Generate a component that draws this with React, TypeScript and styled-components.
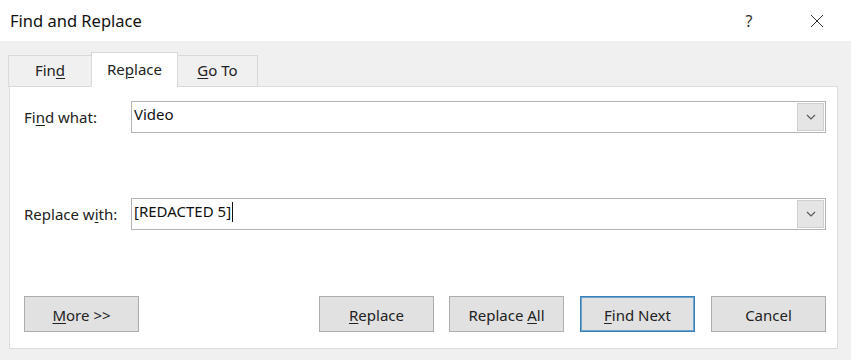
import React from "react";
import styled, { createGlobalStyle } from "styled-components";

const GlobalStyle = createGlobalStyle`
  html, body {
    margin: 0;
    padding: 0;
    background: #f0f0f0;
  }
  body {
    font-family: "Noto Sans", "Open Sans", "Liberation Sans", sans-serif;
    color: #1a1a1a;
  }
`;

const Window = styled.div`
  width: 851px;
  height: 360px;
  display: flex;
  flex-direction: column;
  background: #f0f0f0;
  overflow: hidden;
`;

const TitleBar = styled.div`
  height: 41px;
  flex: none;
  display: flex;
  align-items: center;
  background: #ffffff;
  padding-left: 10px;
`;

const Title = styled.div`
  flex: 1;
  font-size: 16.5px;
  color: #111;
  padding-bottom: 1px;
`;

const TitleButton = styled.div`
  width: 68px;
  height: 41px;
  display: flex;
  align-items: center;
  justify-content: center;
  font-size: 16px;
  color: #333;
`;

const Body = styled.div`
  flex: 1;
  display: flex;
  flex-direction: column;
  padding: 11px 13px 11px 8px;
`;

const TabRow = styled.div`
  display: flex;
  align-items: flex-end;
  height: 35px;
  position: relative;
  z-index: 1;
`;

const Tab = styled.div<{ $active?: boolean; $width: number }>`
  width: ${(p) => p.$width}px;
  height: ${(p) => (p.$active ? 35 : 32)}px;
  line-height: ${(p) => (p.$active ? 33 : 29)}px;
  box-sizing: border-box;
  text-align: center;
  font-size: 15px;
  background: ${(p) => (p.$active ? "#ffffff" : "#f0f0f0")};
  border: 1px solid #d9d9d9;
  border-bottom: ${(p) => (p.$active ? "1px solid #ffffff" : "1px solid #d9d9d9")};
  margin-left: -1px;
  color: #222;
  &:first-child {
    margin-left: 0;
  }
`;

const Panel = styled.div`
  flex: 1;
  margin-top: -1px;
  margin-left: 1px;
  background: #ffffff;
  border: 1px solid #dcdcdc;
  display: flex;
  flex-direction: column;
  padding: 14px 11px 16px 14px;
`;

const FieldRow = styled.div<{ $gap?: number }>`
  display: flex;
  align-items: center;
  margin-top: ${(p) => p.$gap ?? 0}px;
`;

const Label = styled.div`
  width: 107px;
  flex: none;
  font-size: 15px;
  color: #222;
`;

const Combo = styled.div`
  flex: 1;
  height: 32px;
  box-sizing: border-box;
  border: 1px solid #b4b4b4;
  display: flex;
  align-items: stretch;
  background: #fff;
`;

const ComboText = styled.div`
  flex: 1;
  font-size: 15px;
  padding: 2px 0 0 2px;
  color: #111;
  white-space: pre;
`;

const Caret = styled.span`
  display: inline-block;
  width: 1px;
  height: 20px;
  background: #111;
  margin-left: 1px;
  vertical-align: -5px;
`;

const ComboButton = styled.div`
  width: 25px;
  margin: 1px;
  background: #e5e5e5;
  border: 1px solid #cfcfcf;
  display: flex;
  align-items: center;
  justify-content: center;
`;

const Spacer = styled.div`
  flex: 1;
`;

const ButtonRow = styled.div`
  display: flex;
  align-items: center;
`;

const Button = styled.div<{ $primary?: boolean; $gap?: number }>`
  width: 115px;
  height: 36px;
  box-sizing: border-box;
  margin-left: ${(p) => p.$gap ?? 0}px;
  background: #e1e1e1;
  border: 1px solid ${(p) => (p.$primary ? "#3a80b8" : "#adadad")};
  box-shadow: ${(p) => (p.$primary ? "inset 0 0 0 1px #6ea3cc" : "none")};
  text-align: center;
  line-height: 36px;
  font-size: 15px;
  color: #222;
`;

const U = styled.span`
  text-decoration: underline;
  text-underline-offset: 2px;
  text-decoration-thickness: 1px;
`;

const Chevron = () => (
  <svg width="10" height="6" viewBox="0 0 10 6">
    <path d="M1 1 L5 5 L9 1" fill="none" stroke="#555" strokeWidth="1.1" />
  </svg>
);

const CloseIcon = () => (
  <svg width="14" height="14" viewBox="0 0 14 14">
    <path d="M1 1 L13 13 M13 1 L1 13" stroke="#333" strokeWidth="1" fill="none" />
  </svg>
);

const App = () => {
  return (
    <>
      <GlobalStyle />
      <Window>
        <TitleBar>
          <Title>Find and Replace</Title>
          <TitleButton>?</TitleButton>
          <TitleButton>
            <CloseIcon />
          </TitleButton>
        </TitleBar>
        <Body>
          <TabRow>
            <Tab $width={84}>
              Fin<U>d</U>
            </Tab>
            <Tab $active $width={87}>
              Re<U>p</U>lace
            </Tab>
            <Tab $width={81}>
              <U>G</U>o To
            </Tab>
          </TabRow>
          <Panel>
            <FieldRow>
              <Label>
                Fi<U>n</U>d what:
              </Label>
              <Combo>
                <ComboText>Video</ComboText>
                <ComboButton>
                  <Chevron />
                </ComboButton>
              </Combo>
            </FieldRow>
            <FieldRow $gap={65}>
              <Label>
                Replace w<U>i</U>th:
              </Label>
              <Combo>
                <ComboText>
                  [REDACTED 5]
                  <Caret />
                </ComboText>
                <ComboButton>
                  <Chevron />
                </ComboButton>
              </Combo>
            </FieldRow>
            <Spacer />
            <ButtonRow>
              <Button>
                <U>M</U>ore &gt;&gt;
              </Button>
              <Spacer />
              <Button>
                <U>R</U>eplace
              </Button>
              <Button $gap={15}>
                Replace <U>A</U>ll
              </Button>
              <Button $gap={16} $primary>
                <U>F</U>ind Next
              </Button>
              <Button $gap={16}>Cancel</Button>
            </ButtonRow>
          </Panel>
        </Body>
      </Window>
    </>
  );
};

export default App;
